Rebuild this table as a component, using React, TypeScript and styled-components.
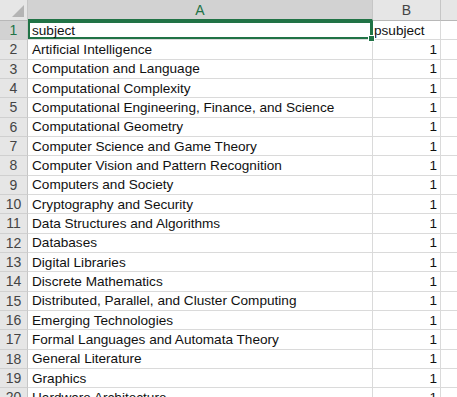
import React from "react";
import styled, { createGlobalStyle } from "styled-components";

const Global = createGlobalStyle`
  html, body { margin: 0; padding: 0; background: #fff; overflow: hidden; }
  body { font-family: "Liberation Sans", Arial, sans-serif; }
`;

const Sheet = styled.div`
  display: grid;
  grid-template-columns: 28px 345px 68px 16px;
  grid-auto-rows: 19.33px;
  grid-template-rows: 21px;
  width: 457px;
  height: 397px;
  overflow: hidden;
  font-family: "Liberation Sans", Arial, sans-serif;
`;

const Corner = styled.div`
  position: relative;
  background: #e6e6e6;
  border-right: 1px solid #c6c6c6;
  border-bottom: 1px solid #b8b8b8;
  box-sizing: border-box;
  &::after {
    content: "";
    position: absolute;
    right: 3px;
    bottom: 3px;
    width: 0;
    height: 0;
    border-left: 12px solid transparent;
    border-bottom: 12px solid #b4b4b4;
  }
`;

const ColHeader = styled.div<{ $active?: boolean }>`
  box-sizing: border-box;
  display: flex;
  align-items: center;
  justify-content: center;
  background: ${(p) => (p.$active ? "#d2d2d2" : "#e6e6e6")};
  color: ${(p) => (p.$active ? "#217346" : "#444")};
  border-right: 1px solid #c6c6c6;
  border-bottom: ${(p) => (p.$active ? "2px solid #217346" : "1px solid #b8b8b8")};
  font-size: 14px;
  padding-top: ${(p) => (p.$active ? "1px" : "0")};
`;

const RowHeader = styled.div<{ $active?: boolean }>`
  box-sizing: border-box;
  display: flex;
  align-items: center;
  justify-content: center;
  background: ${(p) => (p.$active ? "#d2d2d2" : "#e6e6e6")};
  color: ${(p) => (p.$active ? "#217346" : "#444")};
  border-right: 1px solid #c6c6c6;
  border-bottom: 1px solid #d0d0d0;
  font-size: 14px;
`;

const Cell = styled.div<{ $align?: "left" | "right"; $selected?: boolean; $pad?: number }>`
  position: relative;
  box-sizing: border-box;
  display: flex;
  align-items: center;
  justify-content: ${(p) => (p.$align === "right" ? "flex-end" : "flex-start")};
  padding: 0 ${(p) => (p.$align === "right" ? "3px" : "0")} 0
    ${(p) => (p.$align === "right" ? 0 : p.$pad ?? 4)}px;
  border-right: 1px solid #dadada;
  border-bottom: 1px solid #dadada;
  font-size: 13.6px;
  color: #111;
  white-space: nowrap;
  overflow: visible;
  ${(p) =>
    p.$selected
      ? `
    box-shadow: inset 0 0 0 2px #217346;
    border-right-color: #217346;
    z-index: 1;
    &::after {
      content: "";
      position: absolute;
      right: -3px;
      bottom: -3px;
      width: 5px;
      height: 5px;
      background: #217346;
      border: 1px solid #fff;
    }
  `
      : ""}
`;

const FillerHeader = styled.div`
  background: #e6e6e6;
  border-bottom: 1px solid #b8b8b8;
  box-sizing: border-box;
`;

const Filler = styled.div`
  border-bottom: 1px solid #dadada;
  box-sizing: border-box;
`;

const subjects = [
  "Artificial Intelligence",
  "Computation and Language",
  "Computational Complexity",
  "Computational Engineering, Finance, and Science",
  "Computational Geometry",
  "Computer Science and Game Theory",
  "Computer Vision and Pattern Recognition",
  "Computers and Society",
  "Cryptography and Security",
  "Data Structures and Algorithms",
  "Databases",
  "Digital Libraries",
  "Discrete Mathematics",
  "Distributed, Parallel, and Cluster Computing",
  "Emerging Technologies",
  "Formal Languages and Automata Theory",
  "General Literature",
  "Graphics",
  "Hardware Architecture",
];

export default function App() {
  return (
    <>
      <Global />
      <Sheet>
        <Corner />
        <ColHeader $active>A</ColHeader>
        <ColHeader>B</ColHeader>
        <FillerHeader />

        <RowHeader $active>1</RowHeader>
        <Cell $selected>subject</Cell>
        <Cell $pad={1}>psubject</Cell>
        <Filler />

        {subjects.map((s, i) => (
          <React.Fragment key={s}>
            <RowHeader>{i + 2}</RowHeader>
            <Cell>{s}</Cell>
            <Cell $align="right">1</Cell>
            <Filler />
          </React.Fragment>
        ))}
      </Sheet>
    </>
  );
}
